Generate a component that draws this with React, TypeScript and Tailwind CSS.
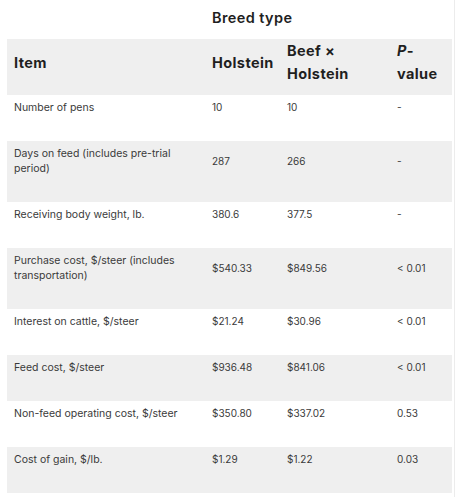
import React from "react";

const rows = [
  { item: "Number of pens", h: "10", b: "10", p: "-" },
  { item: "Days on feed (includes pre-trial period)", h: "287", b: "266", p: "-" },
  { item: "Receiving body weight, lb.", h: "380.6", b: "377.5", p: "-" },
  { item: "Purchase cost, $/steer (includes transportation)", h: "$540.33", b: "$849.56", p: "< 0.01" },
  { item: "Interest on cattle, $/steer", h: "$21.24", b: "$30.96", p: "< 0.01" },
  { item: "Feed cost, $/steer", h: "$936.48", b: "$841.06", p: "< 0.01" },
  { item: "Non-feed operating cost, $/steer", h: "$350.80", b: "$337.02", p: "0.53" },
  { item: "Cost of gain, $/lb.", h: "$1.29", b: "$1.22", p: "0.03" },
];

export default function App() {
  return (
    <div className="w-[458px] h-[500px] bg-white pl-[7px] font-['Inter','Liberation_Sans',sans-serif]">
      <div className="w-[448px] border-r border-[#ececec] h-[497px]">
        <table className="w-[445px] border-collapse table-fixed text-left">
          <colgroup>
            <col className="w-[198px]" />
            <col className="w-[75px]" />
            <col className="w-[110px]" />
            <col className="w-[62px]" />
          </colgroup>
          <thead>
            <tr className="h-[39px] bg-white">
              <th />
              <th colSpan={2} className="align-middle pb-[4px] px-[7px] text-[14.5px] tracking-[0.4px] font-semibold text-[#1f1f1f]">
                Breed type
              </th>
              <th />
            </tr>
            <tr className="h-[56px] bg-[#efefef] text-[14.5px] tracking-[0.4px] font-semibold text-[#1f1f1f] leading-[23px]">
              <th className="px-[7px] pb-[10px] align-middle">Item</th>
              <th className="px-[7px] pb-[10px] align-middle">Holstein</th>
              <th className="px-[7px] pb-[10px] align-middle">
                Beef ×<br />Holstein
              </th>
              <th className="px-[7px] pb-[10px] align-middle">
                <i>P</i>-<br />value
              </th>
            </tr>
          </thead>
          <tbody className="text-[10px] leading-[15px] text-[#3a3a3a]">
            {rows.map((r, i) => (
              <tr key={r.item} className={i % 2 === 1 ? "bg-[#efefef]" : "bg-white"}>
                <td className="px-[7px] pt-[5px] pb-[26px] align-middle text-[10.5px]">{r.item}</td>
                <td className="px-[7px] pt-[5px] pb-[26px] align-middle">{r.h}</td>
                <td className="px-[7px] pt-[5px] pb-[26px] align-middle">{r.b}</td>
                <td className="px-[7px] pt-[5px] pb-[26px] align-middle">{r.p}</td>
              </tr>
            ))}
          </tbody>
        </table>
      </div>
    </div>
  );
}
